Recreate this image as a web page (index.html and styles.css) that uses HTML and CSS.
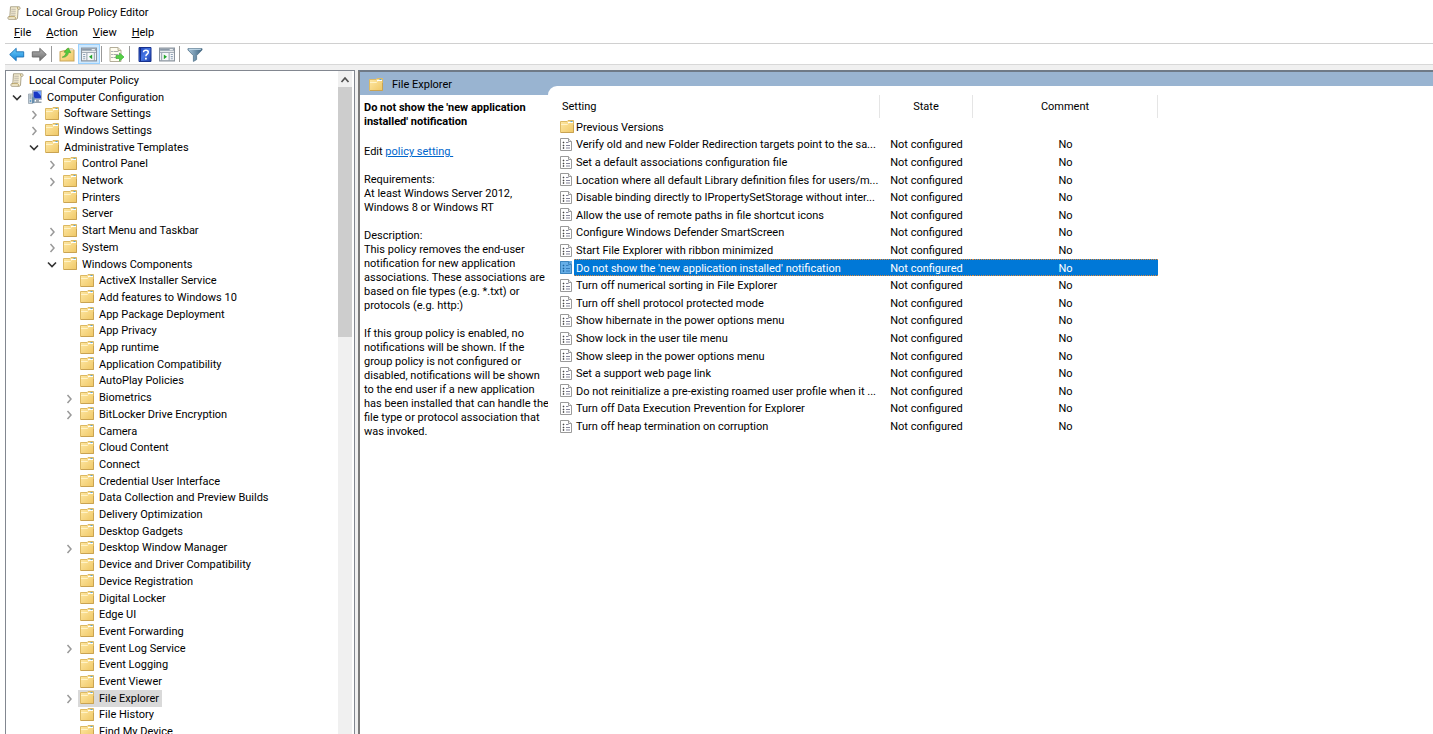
FILE: index.html
```html
<!DOCTYPE html>
<html lang="en">
<head>
<meta charset="utf-8">
<title>Local Group Policy Editor</title>
<link rel="stylesheet" href="styles.css">
</head>
<body>
<svg class="sprite" aria-hidden="true">
  <defs>
    <linearGradient id="gold" x1="0" y1="0" x2="1" y2="1"><stop offset="0" stop-color="#ffe9a6"/><stop offset="1" stop-color="#efc765"/></linearGradient>
    <linearGradient id="sky" x1="0" y1="0" x2="0" y2="1"><stop offset="0" stop-color="#6fd0fb"/><stop offset="1" stop-color="#1583d8"/></linearGradient>
    <linearGradient id="steel" x1="0" y1="0" x2="0" y2="1"><stop offset="0" stop-color="#b4b4b4"/><stop offset="1" stop-color="#6e6e6e"/></linearGradient>
    <linearGradient id="navy" x1="0" y1="0" x2="1" y2="1"><stop offset="0" stop-color="#1b3fb4"/><stop offset=".5" stop-color="#4777e6"/><stop offset="1" stop-color="#1a3aa5"/></linearGradient>
    <linearGradient id="funnel" x1="0" y1="0" x2="1" y2="0"><stop offset="0" stop-color="#a9c4d8"/><stop offset=".5" stop-color="#7295ae"/><stop offset="1" stop-color="#3f6480"/></linearGradient>
  </defs>
  <symbol id="folder" viewBox="0 0 14 14">
    <path d="M.5 1.500h6.500l1-1h5.500v12H.5z" fill="url(#gold)" stroke="#dcb964"/>
    <path d="M8 2.500h5" stroke="#fff"/><path d="M10.500 1.500h2" stroke="#5aa7d6"/>
    <path d="M1 4.500h6.500l1-1" fill="none" stroke="#fff3c8"/><path d="M1 12.500h12.500V5" fill="none" stroke="#c9a352"/>
  </symbol>
  <symbol id="scroll" viewBox="0 0 14 14">
    <path d="M3.500.8h8.700c1.400.5 1.200 2.300.2 2.500h-1.300l-.6 8.800c-.2.800-.7 1.200-1.400 1.200H1.800c-1.400-.4-1.300-2.300-.1-2.600h1.100z" fill="#f8f0d4" stroke="#a39a80" stroke-width=".9"/>
    <path d="M4.300 3.200h4.500M4.200 5.200h4.600M4.100 7.200h4.600M4 9.200h4.500" stroke="#b3aea0" stroke-width=".9"/>
    <path d="M11.200 3.200c-1-.4-1-1.700-.2-2.200M1.800 10.700h6c.8.500.8 1.800.2 2.500" fill="none" stroke="#b59f62"/>
  </symbol>
  <symbol id="computer" viewBox="0 0 14 14">
    <path d="M4.500.5h9v9h-9z" fill="#cdd5df" stroke="#9aa5b0" stroke-width=".8"/><path d="M5.500 1.500H13v7H5.500z" fill="#1737c5"/>
    <path d="M9 1.500h4v4.500z" fill="#6fa1ff"/><path d="M8 9.500h3v2h2.500v1.500H6.500v-1.500H8z" fill="#9aa5af"/>
    <path d="M.5 4h4v9.500h-4z" fill="#c9d3dc" stroke="#8a98a4" stroke-width=".7"/><path d="M1.500 6h2M1.500 8h2" stroke="#7b8f9f"/><path d="M4 7.200h2.600v6H4z" fill="#688eae"/><circle cx="2.500" cy="11" r=".8" fill="#2b83c2"/>
  </symbol>
  <symbol id="policy" viewBox="0 0 12 13">
    <path d="M.5.5h8l3 3v9H.5z" fill="#fff" stroke="#9a9a9a"/><path d="M8.500.5v3h3" fill="#eee" stroke="#9a9a9a"/>
    <path d="M3 4h1v1H3zM3 7h1v1H3zM3 9.500h1v1H3z" fill="#222" stroke="#555" stroke-width=".6"/><path d="M6 4.500h2.500M6 7.500h4M6 10h4" stroke="#85859a"/>
  </symbol>
  <symbol id="back" viewBox="0 0 16 14"><path d="M.7 7 7.200.8v3.500h7.500v5.200H7.200v3.700z" fill="url(#sky)" stroke="#1b6fb4" stroke-width=".9"/></symbol>
  <symbol id="forward" viewBox="0 0 16 14"><path d="M15.300 7 8.800.8v3.500H1.300v5.200h7.500v3.700z" fill="url(#steel)" stroke="#666" stroke-width=".9"/></symbol>
  <symbol id="up" viewBox="0 0 14 14">
    <path d="M.5 4.500 6 3l1-1h5l1.500 1v10H.5z" fill="url(#gold)" stroke="#c9a55a"/><path d="M9 2.500h4" stroke="#d8e6ef"/>
    <path d="M2.500 9.500C5 8.500 6.200 7 6 4.800H4.200L8.200.8l2.300 4.500-2.200-.3C8.300 7.500 6 10 2.500 9.500z" fill="#56cc3c" stroke="#3fa030" stroke-width=".6"/>
  </symbol>
  <symbol id="treepane" viewBox="0 0 15 13">
    <path d="M.5.5h14v12H.5z" fill="#f7f8fa" stroke="#8b949e"/><path d="M1 1h13v2H1z" fill="#8c99a8"/><path d="M10 2h3" stroke="#fff"/><path d="M1 4.500h13" stroke="#9aa4af"/><path d="M5.500 5v7.500M12.500 5v7.500" stroke="#99a4b0"/>
    <path d="M2 6.500h2M2 8.500h2M2 10.500h2" stroke="#8fa3b8"/><path d="M10.500 6.500v4.500L7.500 8.700z" fill="#22a52b"/>
  </symbol>
  <symbol id="actionpane" viewBox="0 0 15 13">
    <path d="M.5.5h14v12H.5z" fill="#f7f8fa" stroke="#8b949e"/><path d="M1 1h13v2H1z" fill="#8c99a8"/><path d="M10 2h3" stroke="#fff"/><path d="M1 4.500h13" stroke="#9aa4af"/><path d="M2.500 5v7.500M9.500 5v7.500" stroke="#99a4b0"/>
    <path d="M11 6.500h2M11 8.500h2M11 10.500h2" stroke="#8fa3b8"/><path d="M4.500 6.500v4.500l3-2.300z" fill="#22a52b"/>
  </symbol>
  <symbol id="export" viewBox="0 0 15 15">
    <path d="M.5.5h8l3 3v11H.5z" fill="#fffdf0" stroke="#b3ad98"/><path d="M8.500.5v3h3" fill="#ece5cc" stroke="#b3ad98"/>
    <path d="M2 4.500h1M2 7.500h1M2 10.500h1" stroke="#5a6a7a"/><path d="M4 4.500h5M4 7.500h5M4 10.500h3" stroke="#aaa"/>
    <path d="M6.500 8.500h3.500V6l4.500 4-4.500 4v-2.500H6.500z" fill="#55d045" stroke="#3cae38" stroke-width=".7"/>
  </symbol>
  <symbol id="help" viewBox="0 0 13 15">
    <path d="M.5.5h12v14H.5z" fill="url(#navy)" stroke="#17318c"/><path d="M2 1v13" stroke="#152d85"/>
    <path d="M5 5.200C5 2.500 9.800 2.600 9.800 5.200 9.800 7.100 7.400 7.200 7.400 9.300" fill="none" stroke="#fff" stroke-width="1.500"/><path d="M6.500 10.700h1.800v1.800H6.500z" fill="#fff"/>
  </symbol>
  <symbol id="filter" viewBox="0 0 15 14">
    <path d="M.9 1.500h13.200v1.300L9 8v3.800l-3 1.700V8L.9 2.800z" fill="url(#funnel)" stroke="#5b7a91" stroke-width=".8"/><path d="M2 2.200h11" stroke="#c9dfee" stroke-width=".9"/>
  </symbol>
  <symbol id="closed" viewBox="0 0 12 12"><path d="m4.500 3 3.500 4-3.500 4" fill="none" stroke="#999" stroke-width="1.500"/></symbol>
  <symbol id="open" viewBox="0 0 12 12"><path d="m2 4.500 4 4 4-4" fill="none" stroke="#333" stroke-width="1.600"/></symbol>
</svg>

<div class="window">
  <header class="titlebar"><svg class="icon"><use href="#scroll"/></svg><span>Local Group Policy Editor</span></header>
  <nav class="menubar">
    <button><u>F</u>ile</button><button><u>A</u>ction</button><button><u>V</u>iew</button><button><u>H</u>elp</button>
  </nav>
  <div class="toolbar" role="toolbar">
    <button aria-label="Back"><svg class="tool"><use href="#back"/></svg></button>
    <button aria-label="Forward"><svg class="tool"><use href="#forward"/></svg></button>
    <i class="divider"></i>
    <button aria-label="Up one level"><svg class="tool"><use href="#up"/></svg></button>
    <button class="pressed" aria-label="Show console tree" aria-pressed="true"><svg class="tool"><use href="#treepane"/></svg></button>
    <i class="divider"></i>
    <button aria-label="Export list"><svg class="tool"><use href="#export"/></svg></button>
    <i class="divider"></i>
    <button aria-label="Help"><svg class="tool"><use href="#help"/></svg></button>
    <button aria-label="Show action pane"><svg class="tool"><use href="#actionpane"/></svg></button>
    <i class="divider"></i>
    <button aria-label="Filter"><svg class="tool"><use href="#filter"/></svg></button>
  </div>

  <main class="workspace">
    <section class="tree-pane">
      <ul class="tree" id="tree" role="tree"></ul>
      <div class="scrollbar">
        <button class="scroll-up" aria-label="Scroll up"><svg viewBox="0 0 14 14"><path d="m3.500 10 3.500-4 3.500 4" fill="none" stroke="#505050" stroke-width="1.700"/></svg></button>
        <div class="thumb"></div>
      </div>
    </section>

    <section class="detail-pane">
      <div class="info">
        <h1 class="info-title"><svg class="icon"><use href="#folder"/></svg>File Explorer</h1>
        <div class="description">
          <h2>Do not show the 'new application<br>installed' notification</h2>
          <p>Edit <a href="#setting">policy setting&nbsp;</a></p>
          <p>Requirements:<br>At least Windows Server 2012,<br>Windows 8 or Windows RT</p>
          <p>Description:<br>This policy removes the end-user<br>notification for new application<br>associations. These associations are<br>based on file types (e.g. *.txt) or<br>protocols (e.g. http:)</p>
          <p>If this group policy is enabled, no<br>notifications will be shown. If the<br>group policy is not configured or<br>disabled, notifications will be shown<br>to the end user if a new application<br>has been installed that can handle the<br>file type or protocol association that<br>was invoked.</p>
        </div>
      </div>
      <div class="list">
        <table>
          <colgroup><col class="col-icon"><col class="col-name"><col class="col-state"><col class="col-comment"></colgroup>
          <thead><tr><th colspan="2" class="head-name">Setting</th><th>State</th><th>Comment</th></tr></thead>
          <tbody id="settings"></tbody>
        </table>
      </div>
    </section>
  </main>
</div>
<script src="app.js"></script>
</body>
</html>
```
FILE: app.js
```js
// Each node: depth, arrow state (">" closed, "v" open, "" none), label, icon
const nodes = [
  [0, "", "Local Computer Policy", "scroll"],
  [1, "v", "Computer Configuration", "computer"],
  [2, ">", "Software Settings"],
  [2, ">", "Windows Settings"],
  [2, "v", "Administrative Templates"],
  [3, ">", "Control Panel"],
  [3, ">", "Network"],
  [3, "", "Printers"],
  [3, "", "Server"],
  [3, ">", "Start Menu and Taskbar"],
  [3, ">", "System"],
  [3, "v", "Windows Components"],
  [4, "", "ActiveX Installer Service"],
  [4, "", "Add features to Windows 10"],
  [4, "", "App Package Deployment"],
  [4, "", "App Privacy"],
  [4, "", "App runtime"],
  [4, "", "Application Compatibility"],
  [4, "", "AutoPlay Policies"],
  [4, ">", "Biometrics"],
  [4, ">", "BitLocker Drive Encryption"],
  [4, "", "Camera"],
  [4, "", "Cloud Content"],
  [4, "", "Connect"],
  [4, "", "Credential User Interface"],
  [4, "", "Data Collection and Preview Builds"],
  [4, "", "Delivery Optimization"],
  [4, "", "Desktop Gadgets"],
  [4, ">", "Desktop Window Manager"],
  [4, "", "Device and Driver Compatibility"],
  [4, "", "Device Registration"],
  [4, "", "Digital Locker"],
  [4, "", "Edge UI"],
  [4, "", "Event Forwarding"],
  [4, ">", "Event Log Service"],
  [4, "", "Event Logging"],
  [4, "", "Event Viewer"],
  [4, ">", "File Explorer"],
  [4, "", "File History"],
  [4, "", "Find My Device"],
];

const arrows = { ">": "closed", v: "open" };

document.getElementById("tree").innerHTML = nodes.map(([depth, arrow, label, icon = "folder"]) => {
  const use = arrows[arrow] ? `<use href="#${arrows[arrow]}"/>` : "";
  const selected = label === "File Explorer" ? " selected" : "";
  return `<li class="node depth-${depth}${selected}" role="treeitem"><svg class="arrow">${use}</svg>` +
    `<span class="node-body"><svg class="icon"><use href="#${icon}"/></svg><span class="node-label">${label}</span></span></li>`;
}).join("");

const settings = [
  "Verify old and new Folder Redirection targets point to the sa...",
  "Set a default associations configuration file",
  "Location where all default Library definition files for users/m...",
  "Disable binding directly to IPropertySetStorage without inter...",
  "Allow the use of remote paths in file shortcut icons",
  "Configure Windows Defender SmartScreen",
  "Start File Explorer with ribbon minimized",
  "Do not show the 'new application installed' notification",
  "Turn off numerical sorting in File Explorer",
  "Turn off shell protocol protected mode",
  "Show hibernate in the power options menu",
  "Show lock in the user tile menu",
  "Show sleep in the power options menu",
  "Set a support web page link",
  "Do not reinitialize a pre-existing roamed user profile when it ...",
  "Turn off Data Execution Prevention for Explorer",
  "Turn off heap termination on corruption",
];

const folderRow = `<tr><td class="cell-icon"><svg class="icon"><use href="#folder"/></svg></td>` +
  `<td class="cell-name">Previous Versions</td><td></td><td></td></tr>`;

document.getElementById("settings").innerHTML = folderRow + settings.map((name) => {
  const current = name.startsWith("Do not show");
  const tint = current ? `<rect width="12" height="13" fill="#0078d7" opacity=".6"/>` : "";
  return `<tr${current ? ' class="current"' : ""}><td class="cell-icon"><svg class="sheet" viewBox="0 0 12 13"><use href="#policy"/>${tint}</svg></td>` +
    `<td class="cell-name">${name}</td><td>Not configured</td><td>No</td></tr>`;
}).join("");
```
FILE: styles.css
```css
* { box-sizing: border-box; }

body {
  margin: 0;
  background: #fff;
  color: #000;
  font: 11px/14px Roboto, "Open Sans", sans-serif;
}

button {
  border: 0;
  padding: 0;
  background: none;
  color: inherit;
  font: inherit;
}

h1, h2, p, ul { margin: 0; padding: 0; }
svg { display: block; flex: none; }
.sprite { position: absolute; width: 0; height: 0; }
.icon { width: 14px; height: 14px; }

.window {
  display: flex;
  flex-direction: column;
  height: 100vh;
  padding-left: 5px;
  overflow: hidden;
}

.titlebar {
  display: flex;
  align-items: center;
  gap: 5px;
  height: 24px;
  padding: 1px 0 0 2px;
}

.menubar {
  display: flex;
  align-items: center;
  gap: 15px;
  height: 19px;
  padding: 0 9px 1px;
}

.toolbar {
  display: flex;
  align-items: center;
  height: 22px;
  flex: none;
  border-top: 1px solid #d0d0d0;
  border-bottom: 1px solid #d8d8d8;
  padding-left: 1px;
}
.toolbar button {
  display: grid;
  place-items: center;
  width: 22px;
  height: 20px;
}
.toolbar .pressed { background: #cce8ff; border: 1px solid #99d1ff; }
.tool { width: 16px; height: 15px; }
.divider { width: 1px; height: 16px; margin: 0 4px 0 1px; background: #999; }

.workspace {
  display: flex;
  flex: 1;
  min-height: 0;
  gap: 3px;
  padding-top: 5px;
  background: #f0f0f0;
}

.tree-pane {
  display: flex;
  flex: none;
  width: 350px;
  border: 1px solid #828790;
  border-bottom: 0;
  background: #fff;
  overflow: hidden;
}
.tree {
  display: grid;
  grid-auto-rows: 1fr;
  flex: 1;
  height: 669px;
  padding-top: 1px;
  list-style: none;
}
.node { display: flex; align-items: center; gap: 3px; min-height: 0; }
.node-label { padding-top: 1px; }
.arrow { width: 12px; height: 12px; }
.depth-0 .arrow { display: none; }
.depth-0 { padding-left: 2px; }
.depth-1 { padding-left: 5px; }
.depth-2 { padding-left: 22px; }
.depth-3 { padding-left: 40px; }
.depth-4 { padding-left: 57px; }
.node-body {
  display: flex;
  align-items: center;
  gap: 5px;
  height: 100%;
  padding: 0 3px 0 2px;
  white-space: nowrap;
}
.selected .node-body { background: #d9d9d9; }

.scrollbar { width: 14px; margin-right: 2px; background: #f0f0f0; }
.scroll-up { display: block; width: 14px; height: 16px; }
.thumb { height: 250px; background: #cdcdcd; }

.detail-pane {
  display: grid;
  grid-template-columns: 188px 1fr;
  flex: 1;
  border-top: 2px solid #6f7a87;
  border-left: 2px solid #7b7b7b;
  background: #99b4d1;
}
.info { display: flex; flex-direction: column; }
.info-title {
  display: flex;
  align-items: center;
  gap: 9px;
  height: 23px;
  padding: 2px 0 0 9px;
  font-size: 11px;
  font-weight: 400;
}
.description {
  display: flex;
  flex-direction: column;
  gap: 14px;
  flex: 1;
  padding: 6px 0 0 4px;
  background: #fff;
  white-space: nowrap;
}
.description h2 { font-size: 11px; font-weight: 700; padding-bottom: 2px; }
.description a { color: #0066cc; }

.list {
  margin-top: 14px;
  border-top-left-radius: 9px;
  background: #fff;
  padding-top: 9px;
}
table { table-layout: fixed; width: 610px; border-spacing: 0; }
.col-icon { width: 26px; }
.col-name { width: 306px; }
.col-state { width: 93px; }
.col-comment { width: 185px; }
th {
  height: 23px;
  padding: 0;
  border-right: 1px solid #e5e5e5;
  font-weight: 400;
}
.head-name { padding-left: 14px; text-align: left; }
tbody td {
  height: 18px;
  padding: 2px 0 0;
  text-align: center;
  white-space: nowrap;
}
tbody tr:nth-child(5n + 1) td, tbody tr:nth-child(5n + 4) td { height: 17px; }
tbody .cell-icon { padding: 0 0 0 12px; }
tbody .cell-name { padding-left: 2px; text-align: left; }
.sheet { width: 12px; height: 13px; }
.current td:not(.cell-icon) {
  color: #fff;
  background:
    repeating-linear-gradient(to right, #e08a3c 0 1px, #0078d7 1px 2px) top / 100% 1px no-repeat,
    repeating-linear-gradient(to right, #e08a3c 0 1px, #0078d7 1px 2px) bottom / 100% 1px no-repeat,
    #0078d7;
}
```
